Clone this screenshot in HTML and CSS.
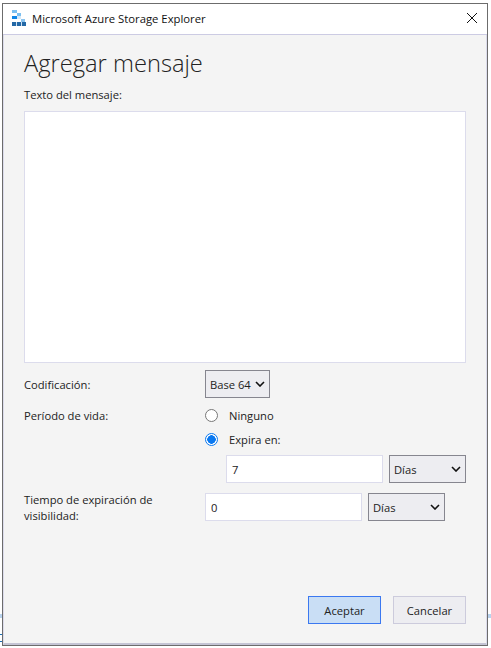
FILE: index.html
```html
<!DOCTYPE html>
<html lang="es">
<head>
    <meta charset="UTF-8">
    <title>Agregar mensaje</title>
    <link rel="stylesheet" href="styles.css">
</head>
<body>
    <!-- Bits of the app behind the dialog -->
    <div class="behind behind-left"></div>
    <div class="behind behind-lines"></div>
    <div class="behind behind-right"></div>

    <div class="window">
        <div class="titlebar">
            <svg class="app-icon" width="14" height="16" viewBox="0 0 14 16">
                <rect x="0" y="0" width="5" height="3" fill="#7cc0f0"/>
                <rect x="5" y="3" width="4" height="3" fill="#7cc0f0"/>
                <rect x="0" y="6" width="5" height="3" fill="#0f86e6"/>
                <rect x="5" y="6" width="4" height="3" fill="#d4e8f8"/>
                <rect x="9" y="9" width="4" height="3" fill="#8cc4ee"/>
                <rect x="0" y="12" width="14" height="4" fill="#2368a6"/>
                <path d="M4.500 12v4M9.500 12v4" stroke="#cfe0f0" stroke-width="1"/>
            </svg>
            <span class="app-title">Microsoft Azure Storage Explorer</span>
            <svg class="close-icon" width="12" height="12" viewBox="0 0 12 12">
                <path d="M1 1l10 10M11 1L1 11" stroke="#111" stroke-width="1" fill="none"/>
            </svg>
        </div>

        <div class="content">
            <h1>Agregar mensaje</h1>
            <label class="message-label">Texto del mensaje:</label>
            <textarea class="message-box"></textarea>

            <div class="form-grid">
                <div class="field-label">Codificación:</div>
                <div class="field">
                    <div class="select-wrap encoding">
                        <select><option>Base 64</option></select>
                        <svg width="10" height="6" viewBox="0 0 10 6"><path d="M1 1l4 4 4-4" stroke="#111" stroke-width="1.600" fill="none"/></svg>
                    </div>
                </div>

                <div class="field-label life-label">Período de vida:</div>
                <div class="field life-field">
                    <label class="radio-row"><input type="radio" name="ttl"> Ninguno</label>
                    <label class="radio-row"><input type="radio" name="ttl" checked> Expira en:</label>
                    <div class="amount-row indented">
                        <input class="text-input" type="text" value="7">
                        <div class="select-wrap unit">
                            <select><option>Días</option></select>
                            <svg width="10" height="6" viewBox="0 0 10 6"><path d="M1 1l4 4 4-4" stroke="#111" stroke-width="1.600" fill="none"/></svg>
                        </div>
                    </div>
                </div>

                <div class="field-label visibility-label">Tiempo de expiración de visibilidad:</div>
                <div class="field">
                    <div class="amount-row">
                        <input class="text-input" type="text" value="0">
                        <div class="select-wrap unit">
                            <select><option>Días</option></select>
                            <svg width="10" height="6" viewBox="0 0 10 6"><path d="M1 1l4 4 4-4" stroke="#111" stroke-width="1.600" fill="none"/></svg>
                        </div>
                    </div>
                </div>
            </div>

            <div class="buttons">
                <button class="btn btn-primary">Aceptar</button>
                <button class="btn">Cancelar</button>
            </div>
        </div>
    </div>
</body>
</html>
```

FILE: styles.css
```css
html, body {
    height: 100%;
}
body {
    margin: 0;
    padding: 3px 3px 2px 2px;
    box-sizing: border-box;
    background-color: #fff;
    font-family: "Open Sans", "Noto Sans", sans-serif;
    font-size: 11.200px;
    color: #222;
    overflow: hidden;
}
/* Slivers of the main window showing round the dialog */
.behind {
    position: absolute;
}
.behind-left {
    left: 0;
    top: 614px;
    width: 2px;
    height: 4px;
    background-color: #b9d3ee;
}
.behind-lines {
    left: 0;
    top: 634px;
    width: 2px;
    height: 6px;
    border-top: 1px solid #1b6fb5;
    border-bottom: 1px solid #1b6fb5;
}
.behind-right {
    right: 0;
    top: 614px;
    width: 3px;
    height: 4px;
    background-color: #b9d3ee;
}
/* Window frame */
.window {
    height: 100%;
    box-sizing: border-box;
    display: flex;
    flex-direction: column;
    border: 1px solid #6c6c6c;
    background-color: #f4f4f4;
}
.titlebar {
    display: flex;
    align-items: center;
    height: 31px;
    flex: none;
    box-sizing: border-box;
    padding: 0 9px 2px 9px;
    background-color: #fff;
    border-bottom: 1px solid #cccbe3;
}
.app-icon {
    margin-right: 6px;
}
.app-title {
    font-size: 11.300px;
    color: #111;
    flex: 1;
}
/* Main content */
.content {
    flex: 1;
    display: flex;
    flex-direction: column;
    padding: 0 20px 19px 20px;
    border-left: 1px solid #dcdcec;
    border-right: 1px solid #dcdcec;
    border-bottom: 2px solid #c4c4d4;
}
h1 {
    margin: 12px 0 0 0;
    font-size: 23.700px;
    font-weight: 300;
    line-height: 32px;
    color: #222;
}
.message-label {
    margin-top: 8px;
    line-height: 16px;
}
.message-box {
    margin-top: 8px;
    height: 252px;
    box-sizing: border-box;
    border: 1px solid #dcdcec;
    background-color: #fff;
    resize: none;
    outline: none;
}
/* Form rows */
.form-grid {
    display: grid;
    grid-template-columns: 181px 1fr;
    margin-top: 7px;
    row-gap: 10px;
}
.field-label {
    line-height: 16px;
    padding-top: 7px;
}
.life-label {
    padding-top: 0;
}
.visibility-label {
    width: 150px;
    padding-top: 0;
    margin-top: -1px;
}
.life-field {
    display: flex;
    flex-direction: column;
    margin-top: -5px;
}
.radio-row {
    display: flex;
    align-items: center;
    height: 24px;
}
.radio-row input {
    appearance: none;
    width: 13px;
    height: 13px;
    margin: 0 11px 0 0;
    border: 1px solid #777;
    border-radius: 50%;
    background-color: #fff;
}
.radio-row input:checked {
    border-color: #0a78f0;
    background: radial-gradient(circle, #0a78f0 0 4px, #fff 4.500px);
}
.amount-row {
    display: flex;
    gap: 6px;
}
.indented {
    margin: 4px 0 0 21px;
}
.text-input {
    width: 157px;
    height: 28px;
    box-sizing: border-box;
    padding: 0 5px;
    border: 1px solid #dcdcec;
    background-color: #fff;
    font: inherit;
    color: #222;
    outline: none;
}
.select-wrap {
    position: relative;
    height: 28px;
}
.select-wrap select {
    appearance: none;
    width: 100%;
    height: 100%;
    box-sizing: border-box;
    padding: 0 0 0 4px;
    border: 1px solid #86868f;
    border-radius: 0;
    background-color: #ededf1;
    font: inherit;
    color: #222;
    outline: none;
}
.select-wrap svg {
    position: absolute;
    right: 5px;
    top: 11px;
    pointer-events: none;
}
.encoding {
    width: 65px;
}
.unit {
    width: 77px;
}
/* Bottom buttons */
.buttons {
    margin-top: auto;
    display: flex;
    justify-content: flex-end;
    gap: 12px;
}
.btn {
    width: 73px;
    height: 28px;
    box-sizing: border-box;
    border: 1px solid #cccbdc;
    background-color: #ededf1;
    font: inherit;
    color: #222;
}
.btn-primary {
    border-color: #3b78f0;
    background-color: #c9def5;
}
```
